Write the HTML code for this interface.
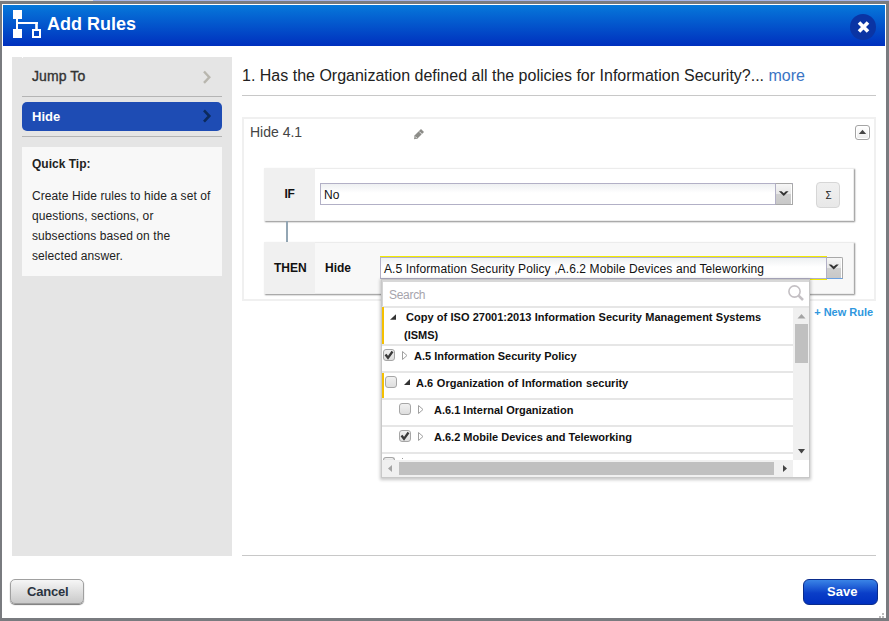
<!DOCTYPE html>
<html><head><meta charset="utf-8">
<style>
*{box-sizing:border-box;margin:0;padding:0}
html,body{width:889px;height:621px;overflow:hidden;background:#fff;font-family:"Liberation Sans",sans-serif;color:#222}
.a{position:absolute;white-space:nowrap}
#frame{left:0;top:0;width:889px;height:621px;background:#797b7f}
#win{left:2px;top:4px;width:884px;height:614px;background:#fff}
#hdr{left:3px;top:5px;width:882px;height:41px;background:linear-gradient(#0678da,#0030be)}
#title{left:47px;top:13px;font-size:18px;font-weight:bold;color:#fff;line-height:22px}
#close{left:850px;top:14px;width:26px;height:26px;border-radius:50%;background:#0a34a4}
#lp{left:12px;top:57px;width:220px;height:499px;background:#e5e5e5}
.sep{height:1px;background:#b4b4b4}
#jump{left:32px;top:68.3px;font-size:14px;color:#333;line-height:16px;letter-spacing:0.1px;-webkit-text-stroke:0.35px #333}
#hidebtn{left:22px;top:102px;width:200px;height:29px;border-radius:5px;background:#1e4cb4}
#hidetxt{left:32px;top:109px;font-size:13px;font-weight:bold;color:#fff;line-height:16px}
#tip{left:22px;top:147px;width:200px;height:129px;background:#f8f8f8}
#tiph{left:32px;top:157px;font-size:12px;font-weight:bold;color:#222;line-height:15px}
#tipb{left:32px;top:186px;letter-spacing:0.09px;font-size:12px;color:#222;line-height:20px}
#q{left:242px;top:66px;font-size:16px;color:#222;line-height:19px}
#q span{color:#3a74c4}
#qline{left:242px;top:95px;width:634px;height:1px;background:#c8c8c8}
#rule{left:242px;top:117px;width:634px;height:184px;border:2px solid #f0f0f0;background:#fff}
#ruleh{left:250px;top:123.6px;font-size:14px;color:#444;line-height:16px}
#ifb{left:264px;top:168px;width:590px;height:53px;background:#fff;border:1px solid #ececec;box-shadow:1px 1px 1.5px rgba(0,0,0,.45)}
#ifl{left:264px;top:168px;width:51px;height:52px;background:#f0f0f0}
#thenb{left:264px;top:242px;width:590px;height:52px;background:#f8f8f8;border:1px solid #ececec;box-shadow:1px 1px 1.5px rgba(0,0,0,.45)}
#thenl{left:264px;top:242px;width:51px;height:52px;background:#f0f0f0}
.lbl{font-size:12px;font-weight:bold;color:#111;line-height:14px}
#conn{left:286px;top:221px;width:2px;height:21px;background:#93a6b4}
.sel{border:1px solid #b2b0c6;background:linear-gradient(#eef0f2,#fff 45%)}
#ifsel{left:320px;top:183px;width:473px;height:22px}
#thensel{left:380px;top:257px;width:447px;height:22px}
.ybar{height:1.5px;background:#f2ea00}
.selbtn{border:1px solid #a8a8a8;border-left:1px solid #b2b0c6;border-radius:0 2px 0 0;background:linear-gradient(#f6f6f6,#e6e6e6 50%,#cfcfcf 52%,#c8c8c8);box-shadow:inset -1px 0 0 #fff}
.seltxt{font-size:12px;color:#111;line-height:14px;letter-spacing:0.107px}
#footline{left:242px;top:555px;width:634px;height:1px;background:#c8c8c8}
#cancel{left:10px;top:579px;width:74px;height:25px;border-radius:5px;border:1px solid #a0a0a0;background:linear-gradient(#f6f6f6,#c9c9c9);box-shadow:0 1px 1px #777}
#canceltxt{left:27px;top:585px;font-size:13px;font-weight:bold;color:#2a3340;line-height:14px;letter-spacing:-0.2px}
#save{left:803px;top:579px;width:75px;height:26px;border-radius:6px;border:1px solid #0a2c8c;background:linear-gradient(#3a84e6,#0a3ec8 55%,#0030c0)}
#savetxt{left:827px;top:585px;font-size:13px;font-weight:bold;color:#fff;line-height:14px}
#dd{left:381px;top:279px;width:429px;height:199px;background:#fff;border:1px solid #c8c8c8;box-shadow:0 1px 3px 1px rgba(0,0,0,.22)}
.rsep{left:382px;width:411px;height:2px;background:#e6e6e6}
.ybl{left:382px;width:2px;background:#f5c000}
.it{font-size:11px;font-weight:bold;color:#111;line-height:13px}
.cb{width:12px;height:12px;border:1px solid #a6a6a6;border-radius:3px;background:linear-gradient(#f0f0f0,#dedede)}
#search{left:389px;top:288px;font-size:12px;letter-spacing:-0.3px;color:#a6a4ac;line-height:14px}
#newrule{left:814.2px;top:306px;font-size:11px;font-weight:bold;color:#2f97de;line-height:13px}
</style></head><body>
<div class="a" id="frame"></div>
<div class="a" style="left:0;top:0;width:93px;height:1px;background:#e6e6e6"></div>
<div class="a" style="left:93px;top:0;width:796px;height:1px;background:#a6b6ea"></div>
<div class="a" id="win"></div>
<div class="a" id="hdr"></div>
<div class="a" id="title">Add Rules</div>
<div class="a" id="close"></div>
<svg class="a" style="left:0;top:0" width="889" height="50">
<rect x="13" y="10" width="9" height="9" fill="#fff"/>
<rect x="13" y="29" width="9" height="9" fill="#fff"/>
<rect x="16" y="19" width="2" height="10" fill="#fff"/>
<rect x="16" y="22" width="22" height="2" fill="#fff"/>
<rect x="35.2" y="22" width="2.6" height="8" fill="#fff"/>
<rect x="33" y="30" width="7" height="7" fill="none" stroke="#fff" stroke-width="2"/>
<path d="M859 22.5L868 31.5M868 22.5L859 31.5" stroke="#fff" stroke-width="3.6"/>
</svg>
<div class="a" id="lp"></div>
<div class="a" style="left:22px;top:57px;width:1px;height:1px;background:#fff"></div>
<div class="a" id="jump">Jump To</div>
<div class="a sep" style="left:22px;top:96px;width:200px"></div>
<div class="a" id="hidebtn"></div>
<div class="a" id="hidetxt">Hide</div>
<svg class="a" style="left:195px;top:60px" width="30" height="70">
<path d="M9 11.5L14.3 17.2L9 22.9" fill="none" stroke="#b8b6ae" stroke-width="2.4"/>
<path d="M9 50.3L14.3 56L9 61.7" fill="none" stroke="#0c2a5c" stroke-width="2.6"/>
</svg>
<div class="a sep" style="left:22px;top:136px;width:200px"></div>
<div class="a" id="tip"></div>
<div class="a" id="tiph">Quick Tip:</div>
<div class="a" id="tipb">Create Hide rules to hide a set of<br>questions, sections, or<br>subsections based on the<br>selected answer.</div>

<div class="a" id="q">1. Has the Organization defined all the policies for Information Security?... <span>more</span></div>
<div class="a" id="qline"></div>
<div class="a" id="rule"></div>
<div class="a" id="ruleh">Hide 4.1</div>
<svg class="a" style="left:410px;top:125px" width="20" height="20">
<path d="M5.5 12.5L12.5 5.5" stroke="#8c8c88" stroke-width="4.2"/>
<path d="M4 14.2L4.6 11L7.2 13.6Z" fill="#8c8c88"/>
<path d="M9.3 6.6L13.4 10.7" stroke="#fff" stroke-width="0.8"/><path d="M5.3 11.6L6.6 12.9" stroke="#fff" stroke-width="0.9"/>
</svg>
<div class="a" style="left:855px;top:125px;width:15px;height:15px;border:1px solid #a4a4a4;border-radius:3px;background:linear-gradient(#fff,#ececec);box-shadow:inset 0 0 0 1px #fff"></div>
<svg class="a" style="left:855px;top:125px" width="15" height="15"><path d="M3.8 9L7.5 4.8L11.2 9Z" fill="#444"/></svg>

<div class="a" id="ifb"></div>
<div class="a" id="ifl"></div>
<div class="a lbl" style="left:284.6px;top:187px;letter-spacing:-0.5px">IF</div>
<div class="a sel" id="ifsel"></div>
<div class="a seltxt" style="left:324px;top:188px">No</div>
<div class="a selbtn" style="left:775px;top:183px;width:18px;height:22px"></div>
<svg class="a" style="left:775px;top:183px" width="18" height="22"><path d="M3.9 8.2H6.6L8.75 10.2L10.9 8.2H13.6L8.75 13Z" fill="#333"/></svg>
<div class="a" style="left:816px;top:182px;width:24px;height:26px;border:1px solid #d6d6d6;border-radius:4px;background:linear-gradient(#f0f0f0,#e8e8e8)"></div>
<div class="a" style="left:825.6px;top:189.5px;font-size:10px;color:#222;line-height:12px">Σ</div>
<div class="a" id="conn"></div>

<div class="a" id="thenb"></div>
<div class="a" id="thenl"></div>
<div class="a lbl" style="left:274px;top:261px">THEN</div>
<div class="a lbl" style="left:325px;top:261px">Hide</div>
<div class="a ybar" style="left:380px;top:255.5px;width:447px"></div>
<div class="a ybar" style="left:805px;top:278.5px;width:22px"></div>
<div class="a sel" id="thensel"></div>
<div class="a seltxt" style="left:384px;top:262px">A.5 Information Security Policy ,A.6.2 Mobile Devices and Teleworking</div>
<div class="a selbtn" style="left:826px;top:257px;width:17px;height:22px;border-bottom:1px solid #6aa0e0"></div>
<svg class="a" style="left:826px;top:257px" width="17" height="22"><path d="M2.6 7.6H5.2L7.7 9.6L10.2 7.6H12.8L7.7 12.6Z" fill="#333"/></svg>
<div class="a" id="newrule">+ New Rule</div>

<div class="a" id="footline"></div>
<div class="a" id="cancel"></div>
<div class="a" id="canceltxt">Cancel</div>
<div class="a" id="save"></div>
<div class="a" id="savetxt">Save</div>
<svg class="a" style="left:876px;top:610.5px" width="10" height="10">
<rect x="6" y="2" width="2" height="2" fill="#bbb"/><rect x="3" y="5" width="2" height="2" fill="#bbb"/><rect x="6" y="5" width="2" height="2" fill="#bbb"/>
</svg>

<!-- dropdown -->
<div class="a" id="dd"></div>
<div class="a" style="left:382px;top:280px;width:427px;height:27px;border-top:2px solid #d8d8d8;border-left:1px solid #d4d4d4"></div>
<div class="a" id="search">Search</div>
<svg class="a" style="left:785px;top:283px" width="22" height="22">
<circle cx="9.5" cy="8.5" r="5.6" fill="none" stroke="#c4c0c4" stroke-width="1.6"/>
<path d="M13.6 12.6L18 17" stroke="#c4c0c4" stroke-width="2.6"/>
</svg>
<div class="a rsep" style="top:306px;width:427px"></div>
<div class="a" id="rows"></div>
<div class="a ybl" style="top:307px;height:37px"></div>
<div class="a rsep" style="top:344px"></div>
<div class="a rsep" style="top:371px"></div>
<div class="a ybl" style="top:373px;height:25px"></div>
<div class="a rsep" style="top:398px"></div>
<div class="a rsep" style="top:425px"></div>
<div class="a rsep" style="top:452px"></div>

<svg class="a" style="left:380px;top:300px" width="60" height="170">
<path d="M10 19.8L16 14.2V19.8Z" fill="#333"/>
<path d="M24 85L30 79V85Z" fill="#333"/>
<path d="M22.5 51.5L27 55.5L22.5 59.5Z" fill="none" stroke="#a0a0a0" stroke-width="1"/>
<path d="M38.5 105.5L43 109.5L38.5 113.5Z" fill="none" stroke="#a0a0a0" stroke-width="1"/>
<path d="M38.5 132.5L43 136.5L38.5 140.5Z" fill="none" stroke="#a0a0a0" stroke-width="1"/>
</svg>
<div class="a it" style="left:406px;top:311px;word-spacing:0.25px">Copy of ISO 27001:2013 Information Security Management Systems</div>
<div class="a it" style="left:404px;top:329px;letter-spacing:0px">(ISMS)</div>
<div class="a cb" style="left:383px;top:349px"></div>
<div class="a it" style="left:414px;top:350px">A.5 Information Security Policy</div>
<div class="a cb" style="left:385px;top:376px"></div>
<div class="a it" style="left:416px;top:377px;word-spacing:0.65px">A.6 Organization of Information security</div>
<div class="a cb" style="left:399px;top:403px"></div>
<div class="a it" style="left:434px;top:404px">A.6.1 Internal Organization</div>
<div class="a cb" style="left:399px;top:430px"></div>
<div class="a it" style="left:434px;top:431px">A.6.2 Mobile Devices and Teleworking</div>
<div class="a cb" style="left:383px;top:457px;height:4px;border-bottom:none;border-radius:3px 3px 0 0"></div>
<svg class="a" style="left:380px;top:340px" width="40" height="110">
<path d="M5.5 14.5L8 17.8L12.5 11.5" fill="none" stroke="#3a3a3a" stroke-width="2.3"/>
<path d="M21.5 95.5L24 98.8L28.5 92.5" fill="none" stroke="#3a3a3a" stroke-width="2.3"/>
</svg>

<!-- scrollbars -->
<div class="a" style="left:793px;top:308px;width:16px;height:152px;background:#f0f0f0"></div>
<div class="a" style="left:795px;top:324px;width:13px;height:39px;background:#c0c0c0"></div>
<div class="a" style="left:402px;top:458px;width:1px;height:1px;background:#999"></div>
<div class="a" style="left:382px;top:460px;width:411px;height:17px;background:#f0f0f0"></div>
<div class="a" style="left:399px;top:462px;width:375px;height:13px;background:#c0c0c0"></div>
<svg class="a" style="left:380px;top:300px" width="430" height="180">
<path d="M417.5 18.5L421.5 14L425.5 18.5Z" fill="#a4a4a4"/>
<path d="M418 149L425 149L421.5 153.5Z" fill="#444"/>
<path d="M8 168.5L12 165V172Z" fill="#a4a4a4"/>
<path d="M403 165L407 168.5L403 172Z" fill="#444"/>
</svg>
</body></html>
